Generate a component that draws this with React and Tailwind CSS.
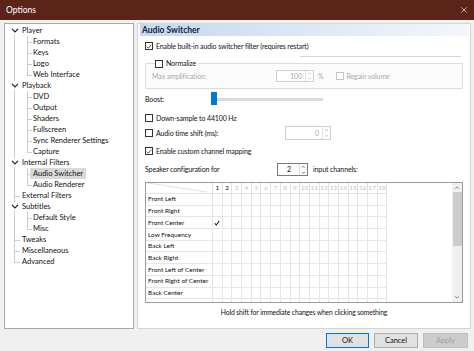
import React from "react";

const tree = [
  { label: "Player", level: 0, open: true },
  { label: "Formats", level: 1 },
  { label: "Keys", level: 1 },
  { label: "Logo", level: 1 },
  { label: "Web Interface", level: 1, last: true },
  { label: "Playback", level: 0, open: true },
  { label: "DVD", level: 1 },
  { label: "Output", level: 1 },
  { label: "Shaders", level: 1 },
  { label: "Fullscreen", level: 1 },
  { label: "Sync Renderer Settings", level: 1 },
  { label: "Capture", level: 1, last: true },
  { label: "Internal Filters", level: 0, open: true },
  { label: "Audio Switcher", level: 1, selected: true },
  { label: "Audio Renderer", level: 1, last: true },
  { label: "External Filters", level: 0 },
  { label: "Subtitles", level: 0, open: true },
  { label: "Default Style", level: 1 },
  { label: "Misc", level: 1, last: true },
  { label: "Tweaks", level: 0 },
  { label: "Miscellaneous", level: 0 },
  { label: "Advanced", level: 0 },
];

const speakers = [
  "Front Left",
  "Front Right",
  "Front Center",
  "Low Frequency",
  "Back Left",
  "Back Right",
  "Front Left of Center",
  "Front Right of Center",
  "Back Center",
  "Side Left",
  "Side Right",
];

const cols = Array.from({ length: 18 }, (_, i) => i + 1);

function Check({ checked, disabled }) {
  return (
    <span
      className={`w-[8px] h-[8px] shrink-0 border bg-white flex items-center justify-center ${
        disabled ? "border-[#c4c4c4]" : "border-[#333333]"
      }`}
    >
      {checked && (
        <svg viewBox="0 0 8 8" className="w-[7px] h-[7px]">
          <path d="M1 4.2 L3 6.3 L7 1.6" stroke="#222" strokeWidth="1" fill="none" />
        </svg>
      )}
    </span>
  );
}

function Spin({ value, className, disabled, align = "right" }) {
  return (
    <div
      className={`flex items-stretch border bg-white ${
        disabled ? "border-[#cfcfcf] text-[#a8a8a8]" : "border-[#7a7a7a] text-[#111]"
      } ${className}`}
    >
      <span className={`flex-1 flex items-center px-[3px] ${align === "right" ? "justify-end" : "justify-start pl-[9px]"}`}>
        {value}
      </span>
      <span className="w-[8px] flex flex-col border-l border-[#e0e0e0]">
        <svg viewBox="0 0 8 6" className="flex-1 w-full">
          <path d="M2.5 4 L4 2.3 L5.5 4" stroke={disabled ? "#b0b0b0" : "#555"} fill="none" strokeWidth="0.9" />
        </svg>
        <svg viewBox="0 0 8 6" className="flex-1 w-full">
          <path d="M2.5 2 L4 3.7 L5.5 2" stroke={disabled ? "#b0b0b0" : "#555"} fill="none" strokeWidth="0.9" />
        </svg>
      </span>
    </div>
  );
}

function TreeRow({ item, idx }) {
  const isFirst = idx === 0;
  const isLastTop = idx === tree.length - 1;
  return (
    <div className="relative h-[11px] flex items-center">
      {/* top-level connector */}
      <span
        className="absolute left-[8px] w-px bg-[#cccccc]"
        style={{ top: isFirst ? "50%" : 0, bottom: isLastTop ? "50%" : 0 }}
      />
      {item.level === 0 && !item.open && (
        <span className="absolute left-[8px] top-1/2 w-[6px] h-px bg-[#cccccc]" />
      )}
      {item.level === 0 && item.open && (
        <span className="absolute z-10 left-[3px] top-[1px] w-[11px] h-[9px] bg-white flex items-center justify-center">
          <svg width="8" height="5" viewBox="0 0 8 5" className="block">
            <path d="M1 0.9 L4 3.9 L7 0.9" stroke="#1f1f1f" strokeWidth="1.2" fill="none" />
          </svg>
        </span>
      )}
      {item.level === 1 && (
        <>
          <span
            className="absolute left-[21px] w-px bg-[#cccccc]"
            style={{ top: 0, bottom: item.last ? "50%" : 0 }}
          />
          <span className="absolute left-[21px] top-1/2 w-[5px] h-px bg-[#cccccc]" />
        </>
      )}
      <span
        className={`relative whitespace-nowrap leading-[11px] ${
          item.level === 0 ? "ml-[16px]" : "ml-[24px] px-[3px]"
        } ${item.selected ? "bg-[#d9d9d9]" : ""}`}
      >
        {item.label}
      </span>
    </div>
  );
}

export default function App() {
  return (
    <div
      className="w-[474px] h-[351px] bg-[#f0f0f0] text-[#111] flex flex-col overflow-hidden"
      style={{ fontFamily: "Lato, 'Liberation Sans', sans-serif" }}
    >
      {/* Title bar */}
      <div className="h-[20px] shrink-0 bg-[#5b2418] flex items-center justify-between pl-[6px] pr-[7px] text-white">
        <span className="text-[8.5px] leading-none">Options</span>
        <svg viewBox="0 0 8 8" className="w-[6px] h-[6px]">
          <path d="M0.5 0.5 L7.5 7.5 M7.5 0.5 L0.5 7.5" stroke="#f2e6e2" strokeWidth="0.9" />
        </svg>
      </div>

      {/* Body */}
      <div className="flex gap-[3px] pt-[3px] pl-[4px] pr-[3px]">
        {/* Tree */}
        <div className="w-[130px] h-[306px] bg-white border border-[#a9a9a9] pt-[1px] pl-[1px] text-[7.5px]">
          {tree.map((item, i) => (
            <TreeRow key={item.label} item={item} idx={i} />
          ))}
        </div>

        {/* Page */}
        <div className="w-[334px] h-[306px] bg-white border border-[#d4d4d4] flex flex-col text-[7px] tracking-[-0.12px]">
          <div className="h-[12px] shrink-0 ml-[2px] mr-[1px] bg-gradient-to-r from-[#c5d8ee] via-[#dce8f5] to-[#f3f7fb] flex items-center pl-[2px]">
            <span className="font-bold text-[8.5px] tracking-normal text-[#14203a]">Audio Switcher</span>
          </div>

          <div className="px-[7px] flex flex-col">
            <div className="h-[10px] mt-[5px] flex items-center gap-[3px]">
              <Check checked />
              <span>Enable built-in audio switcher filter (requires restart)</span>
            </div>

            <div className="h-[1px] mt-[5px] ml-[155px] mr-[2px] bg-[#d6d6d6]" />

            {/* Normalize group */}
            <div className="relative mt-[6px] h-[26px] border border-[#dcdcdc] bg-[#fbfbfb] flex items-center pl-[6px] pr-[4px]">
              <div className="absolute -top-[5px] left-[9px] h-[9px] flex items-center gap-[3px] bg-white pr-[2px]">
                <Check />
                <span>Normalize</span>
              </div>
              <span className="w-[124px] text-[#ababab]">Max amplification:</span>
              <Spin value="100" disabled className="w-[38px] h-[12px]" />
              <span className="ml-[4px] text-[#ababab]">%</span>
              <div className="ml-[12px] flex items-center gap-[3px]">
                <Check disabled />
                <span className="text-[#ababab]">Regain volume</span>
              </div>
            </div>

            {/* Boost */}
            <div className="h-[14px] mt-[3px] flex items-center">
              <span className="w-[66px]">Boost:</span>
              <div className="relative w-[112px] h-[14px] flex items-center">
                <div className="w-full h-[3px] bg-[#dadada]" />
                <div className="absolute left-0 top-0 w-[6px] h-[13px] bg-[#0078d7]" />
              </div>
            </div>

            <div className="h-[10px] mt-[7px] flex items-center gap-[3px]">
              <Check />
              <span>Down-sample to 44100 Hz</span>
            </div>

            <div className="h-[14px] mt-[3px] flex items-center">
              <Check />
              <span className="ml-[3px]">Audio time shift (ms):</span>
              <Spin value="0" disabled className="ml-auto mr-[132px] w-[46px] h-[14px]" />
            </div>

            <div className="h-[10px] mt-[6px] flex items-center gap-[3px]">
              <Check checked />
              <span>Enable custom channel mapping</span>
            </div>

            <div className="h-[13px] mt-[7px] flex items-center">
              <span className="w-[132px]">Speaker configuration for</span>
              <Spin value="2" align="left" className="w-[31px] h-[13px]" />
              <span className="ml-[5px]">input channels:</span>
            </div>

            {/* Mapping grid */}
            <div className="mt-[6px] h-[121px] shrink-0 border border-[#9a9a9a] bg-white flex overflow-hidden tracking-normal">
              <div className="flex-1 flex flex-col overflow-hidden">
                <div className="h-[11px] shrink-0 flex">
                  <div className="relative w-[67px] border-r border-b border-[#e2e2e2]">
                    <svg className="absolute inset-0 w-full h-full" viewBox="0 0 67 11" preserveAspectRatio="none">
                      <line x1="2" y1="0" x2="62" y2="10" stroke="#d8d8d8" strokeWidth="0.8" />
                    </svg>
                  </div>
                  {cols.map((c) => (
                    <div
                      key={c}
                      className={`w-[9.7px] border-r border-b border-[#e2e2e2] flex items-center justify-center text-[6.5px] ${
                        c <= 2 ? "text-[#111]" : "text-[#c4c4c4]"
                      }`}
                    >
                      {c}
                    </div>
                  ))}
                </div>
                {speakers.map((s) => (
                  <div key={s} className="h-[11.7px] shrink-0 flex">
                    <div className="w-[67px] border-r border-b border-[#e6e6e6] flex items-center pl-[2px] text-[6.5px] whitespace-nowrap overflow-hidden">
                      {s}
                    </div>
                    {cols.map((c) => (
                      <div
                        key={c}
                        className="w-[9.7px] border-r border-b border-[#e6e6e6] flex items-center justify-center"
                      >
                        {s === "Front Center" && c === 1 && (
                          <svg viewBox="0 0 8 8" className="w-[6px] h-[6px]">
                            <path d="M1 4.3 L3 6.6 L7 1.4" stroke="#111" strokeWidth="1.4" fill="none" />
                          </svg>
                        )}
                      </div>
                    ))}
                  </div>
                ))}
              </div>
              {/* Scrollbar */}
              <div className="w-[10px] bg-[#f0f0f0] flex flex-col items-center">
                <svg viewBox="0 0 8 6" className="w-[6px] h-[6px] mt-[2px]">
                  <path d="M1.5 4 L4 1.5 L6.5 4" stroke="#555" strokeWidth="0.9" fill="none" />
                </svg>
                <div className="w-[9px] h-[54px] mt-[1px] bg-[#cdcdcd]" />
                <div className="flex-1" />
                <svg viewBox="0 0 8 6" className="w-[6px] h-[6px] mb-[2px]">
                  <path d="M1.5 2 L4 4.5 L6.5 2" stroke="#555" strokeWidth="0.9" fill="none" />
                </svg>
              </div>
            </div>

            <div className="h-[11px] mt-[4px] flex items-center justify-center text-[6.8px] leading-[11px]">
              Hold shift for immediate changes when clicking something
            </div>
          </div>
        </div>
      </div>

      {/* Buttons */}
      <div className="flex justify-end gap-[5px] pr-[6px] mt-[4px] text-[7.5px]">
        <button className="w-[43px] h-[15px] bg-[#e1e1e1] border-[1.5px] border-[#0078d7]">OK</button>
        <button className="w-[44px] h-[15px] bg-[#e1e1e1] border border-[#adadad]">Cancel</button>
        <button className="w-[45px] h-[15px] bg-[#cccccc] border border-[#bfbfbf] text-[#a0a0a0]">Apply</button>
      </div>
    </div>
  );
}
